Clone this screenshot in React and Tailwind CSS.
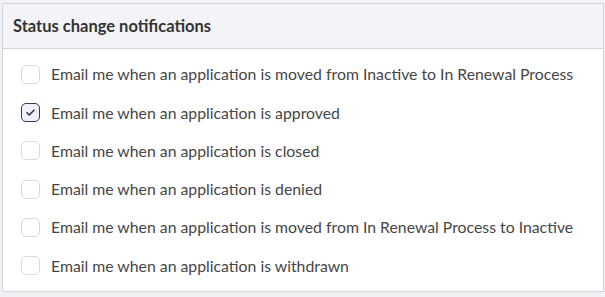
const options = [
  { label: 'Email me when an application is moved from Inactive to In Renewal Process', checked: false },
  { label: 'Email me when an application is approved', checked: true },
  { label: 'Email me when an application is closed', checked: false },
  { label: 'Email me when an application is denied', checked: false },
  { label: 'Email me when an application is moved from In Renewal Process to Inactive', checked: false },
  { label: 'Email me when an application is withdrawn', checked: false },
];

function Checkbox({ checked }) {
  return checked ? (
    <span className="w-[19px] h-[19px] rounded-[5px] border-[1.5px] border-[#2f3a5c] bg-[#eef0fa] flex items-center justify-center shrink-0">
      <svg viewBox="0 0 12 12" className="w-[11px] h-[11px]" fill="none" stroke="#2f3a5c" strokeWidth="1.8" strokeLinecap="round" strokeLinejoin="round">
        <path d="M2.2 6.3l2.5 2.4 5-5.2" />
      </svg>
    </span>
  ) : (
    <span className="w-[19px] h-[19px] rounded-[5px] border border-[#d7d9de] bg-white shrink-0" />
  );
}

export default function App() {
  return (
    <div className="w-[605px] h-[297px] bg-[#f0f1f5] pt-[3px] pl-[2px] pr-[1px]" style={{ fontFamily: 'Lato, "Open Sans", sans-serif' }}>
      <div className="h-[289px] bg-white border border-[#d3d5db]">
        <div className="h-[45px] bg-[#f3f4f7] border-b border-[#d3d5db] flex items-center px-[10px]">
          <h3 className="text-[16.5px] font-bold text-[#333]">Status change notifications</h3>
        </div>
        <div className="pt-[6px] px-[18px]">
          {options.map((o) => (
            <label key={o.label} className="h-[38.3px] flex items-center gap-[11px]">
              <Checkbox checked={o.checked} />
              <span className="text-[15.8px] text-[#464646]">{o.label}</span>
            </label>
          ))}
        </div>
      </div>
    </div>
  );
}
